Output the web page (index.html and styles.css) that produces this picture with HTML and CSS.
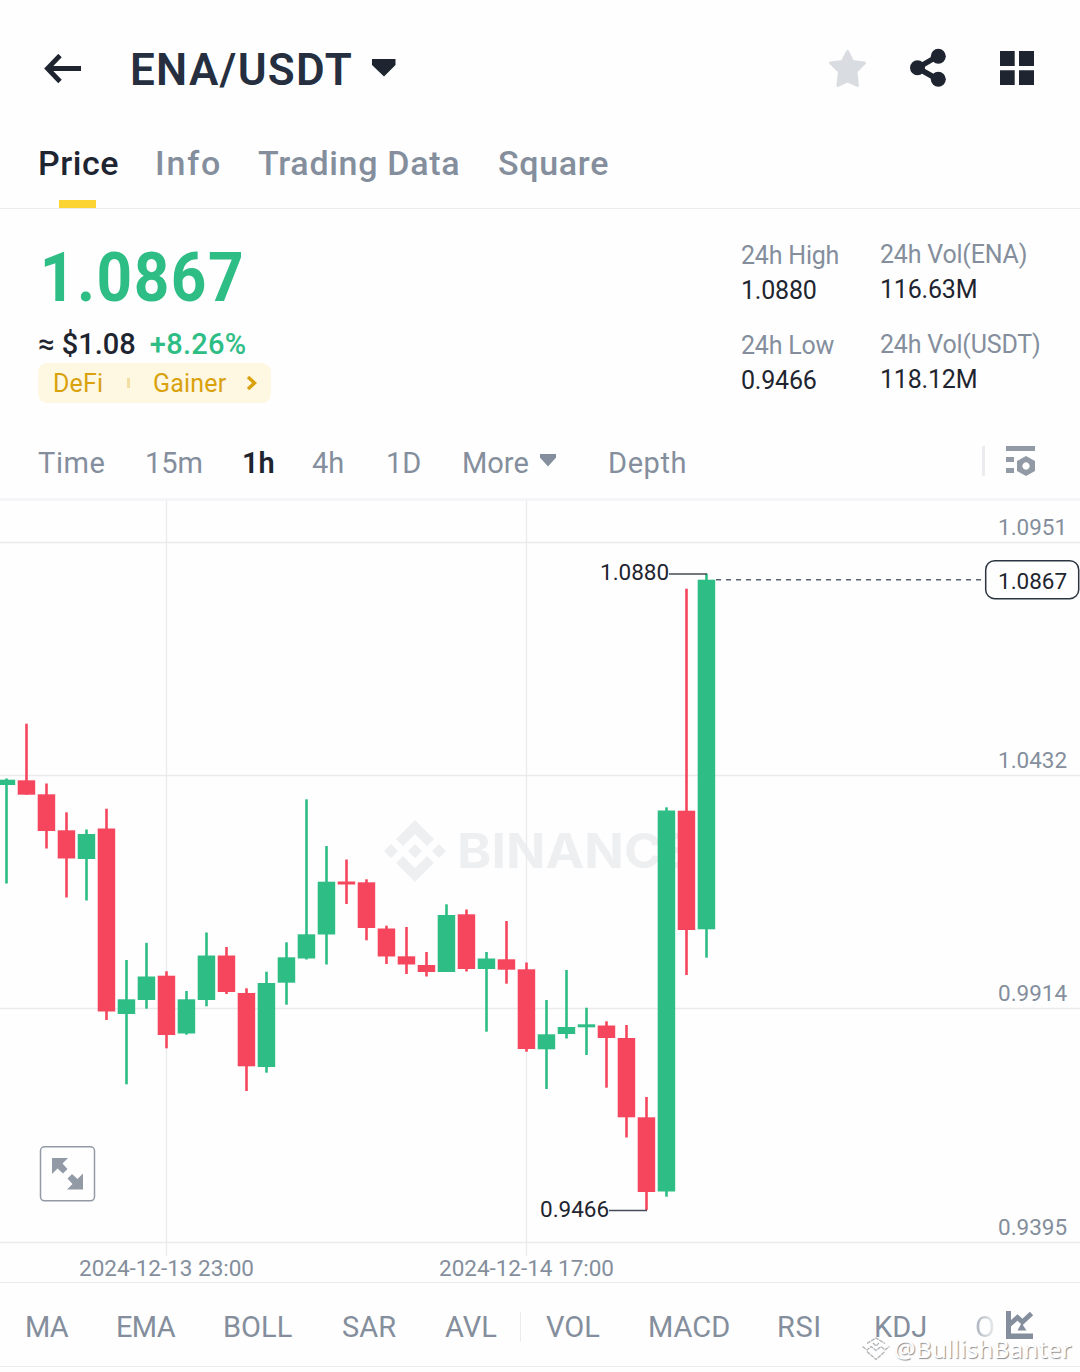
FILE: index.html
```html
<!DOCTYPE html>
<html lang="en">
<head>
  <meta charset="UTF-8" />
  <meta name="viewport" content="width=device-width, initial-scale=1.0"/>
  <title>ENA/USDT</title>
  <link rel="stylesheet" href="styles.css">
</head>
<body>

  <header class="header">
    <svg class="back" width="38" height="30" viewBox="0 0 38 30"><path d="M16 1.500 3.500 14.500l12.500 13M3.500 14.500h33.500" fill="none" stroke="#1e2530" stroke-width="4.800"/></svg>
    <h1 class="pair">ENA/USDT</h1>
    <svg class="pair-caret" width="24" height="18" viewBox="0 0 24 18"><path d="M0 0h23.500v6L12 17.500 0 6z" fill="#1e2530"/></svg>
    <div class="actions">
      <svg width="40" height="40" viewBox="0 0 40 40"><path d="M19.500 3.500l5 10 12 1.500-8.500 8.500 1.400 14L19.500 33 10 37.500l1.400-14L2.500 15l12-1.500z" fill="#d9dce1" stroke="#d9dce1" stroke-width="3" stroke-linejoin="round"/></svg>
      <svg width="38" height="40" viewBox="0 0 38 40"><path d="M29 8 8.500 20 29 31.500" fill="none" stroke="#1e2530" stroke-width="5.500"/><g fill="#1e2530"><circle cx="8.500" cy="19.800" r="7.500"/><circle cx="29.300" cy="8.300" r="7.500"/><circle cx="29.300" cy="31.300" r="7.500"/></g></svg>
      <svg width="34" height="34" viewBox="0 0 34 34"><path d="M0 0h14.700v15H0zM19 0h15v15H19zM0 19.300h14.700V34H0zM19 19.300h15V34H19z" fill="#1e2530"/></svg>
    </div>
  </header>

  <nav class="tabs">
    <div class="tab active">Price</div>
    <div class="tab tab-info">Info</div>
    <div class="tab">Trading Data</div>
    <div class="tab">Square</div>
  </nav>

  <section class="summary">
    <div class="quote">
      <div class="price">1.0867</div>
      <div class="fiat">≈ <span class="fiat-value">$1.08</span><span class="change">+8.26%</span></div>
      <div class="tags">
        <span class="tag-first">DeFi</span>
        <span class="tag-line"></span>
        <span>Gainer</span>
        <svg class="tag-arrow" width="12" height="16" viewBox="0 0 12 16"><path d="M2 2l6.500 6L2 14" fill="none" stroke="#d9a20d" stroke-width="3.400"/></svg>
      </div>
    </div>
    <div class="stats">
      <dl><dt>24h High</dt><dd>1.0880</dd></dl>
      <dl><dt>24h Low</dt><dd>0.9466</dd></dl>
    </div>
    <div class="stats stats-vol">
      <dl><dt>24h Vol(ENA)</dt><dd>116.63M</dd></dl>
      <dl><dt>24h Vol(USDT)</dt><dd>118.12M</dd></dl>
    </div>
  </section>

  <nav class="intervals">
    <span class="wide">Time</span>
    <span>15m</span>
    <span class="active">1h</span>
    <span>4h</span>
    <span>1D</span>
    <span>More</span>
    <svg class="more-caret" width="16" height="13" viewBox="0 0 16 13"><path d="M0 0h16v3.500L8 12.500 0 3.500z" fill="#848e9c"/></svg>
    <span class="wide">Depth</span>
    <div class="settings">
      <svg width="30" height="30" viewBox="0 0 30 30"><g fill="#929aa6"><path d="M0 0h29v5H0zM0 11h8v5H0zM0 22h8v5H0z"/><path fill-rule="evenodd" d="M20 10l9 5v10l-9 5-9-5V15zM20 16.300a3.700 3.700 0 1 0 .01 0z"/></g></svg>
    </div>
  </nav>

  <main class="chart">
    <svg id="chart" width="1080" height="781" viewBox="0 501 1080 781">
      <g class="watermark">
        <path d="M415 820l19 19-7 7-12-12-12 12-7-7zM415 882l19-19-7-7-12 12-12-12-7 7zM391 844l7 7-7 7-7-7zM439 844l7 7-7 7-7-7zM415 844l7 7-7 7-7-7z"/>
        <text x="457" y="868" textLength="237" lengthAdjust="spacingAndGlyphs">BINANCE</text>
      </g>
      <path class="grid" d="M0 542.500H1080M0 775.500H1080M0 1008.500H1080M0 1242.500H1080M166.500 501V1256M526.500 501V1256"/>
      <g id="candles"></g>
      <path class="marker" d="M669 574H707M609 1210.500H647"/>
      <path class="last-line" d="M716 579.700H982"/>
      <rect class="last-box" x="985.700" y="560.700" width="93" height="38" rx="9"/>
      <g class="dark">
        <text x="600" y="579.500">1.0880</text>
        <text x="540" y="1216.500">0.9466</text>
        <text x="998" y="588.500">1.0867</text>
      </g>
      <g class="axis">
        <text x="998" y="534.500">1.0951</text>
        <text x="998" y="768">1.0432</text>
        <text x="998" y="1001">0.9914</text>
        <text x="998" y="1234.500">0.9395</text>
        <text x="79" y="1275.500" textLength="175">2024-12-13 23:00</text>
        <text x="439" y="1275.500" textLength="175">2024-12-14 17:00</text>
      </g>
      <rect class="expand-box" x="40.500" y="1146.800" width="54" height="54" rx="4"/>
      <path class="expand" d="M52 1158h16l-5.500 5.500 5 5.500-4.500 4.500-5.500-5-5.500 5.500zM83 1189.500h-16l5.500-5.500-5-5.500 4.500-4.500 5.500 5 5.500-5.500z"/>
    </svg>
  </main>

  <footer class="indicators">
    <span class="narrow">MA</span>
    <span class="narrow">EMA</span>
    <span>BOLL</span>
    <span>SAR</span>
    <span>AVL</span>
    <span class="split">VOL</span>
    <span>MACD</span>
    <span class="wide">RSI</span>
    <span>KDJ</span>
    <span class="fade">O</span>
    <svg class="chart-icon" width="28" height="28" viewBox="0 0 28 28"><path d="M0 0h5v22.500h22V28H0z" fill="#848e9c"/><path d="M3 14l8.500-7.500 5 4.500L25.500 2.500" fill="none" stroke="#848e9c" stroke-width="4.800"/><path d="M15.500 12l5 7.500h-9z" fill="#848e9c"/></svg>
  </footer>

  <div class="credit">
    <svg width="28" height="24" viewBox="0 0 28 24"><path d="M5 6.500l9-5.500 9 5.500M.5 9.500l4.500 3.500 4-3.500 5 4 5-4 4 3.500 4.500-3.500M5 14.500l9 8 9-8M11 6l3 3 3-3" fill="none" stroke="#b0b2b5" stroke-width="1.300" stroke-dasharray="4 .8"/></svg>
    <span>@BullishBanter</span>
  </div>

  <script src="script.js"></script>
</body>
</html>
```

FILE: styles.css
```css
body {
  margin: 0;
  width: 1080px;
  height: 1372px;
  overflow: hidden;
  position: relative;
  background: #fefefe;
  color: #1e2530;
  font-family: Roboto, "Noto Sans", sans-serif;
}
svg {
  display: block;
  flex: none;
}
.header {
  display: flex;
  align-items: center;
  height: 139px;
  padding: 0 46px 0 44px;
}
.back {
  margin-bottom: 2px;
}
.pair {
  margin: 0 0 0 48px;
  width: 242px;
  font-size: 44px;
  font-weight: 600;
  letter-spacing: 1.3px;
  color: #252f3f;
}
.pair-caret {
  margin-bottom: 4px;
}
.actions {
  display: flex;
  align-items: center;
  margin: 0 0 3px auto;
}
.actions svg:nth-child(2) {
  margin: 0 53px 0 41px;
}
.tabs {
  display: grid;
  grid-template-columns: 117px 103px 240px 1fr;
  height: 69px;
  padding-left: 38px;
  border-bottom: 1px solid #eaecef;
}
.tab {
  font-size: 34px;
  font-weight: 500;
  line-height: 48px;
  letter-spacing: 0.7px;
  color: #848e9c;
  white-space: nowrap;
}
.tab-info {
  letter-spacing: 1.8px;
}
.tab.active {
  color: #1e2530;
  letter-spacing: 0.5px;
}
.tab.active::after {
  content: "";
  display: block;
  width: 37px;
  height: 8px;
  margin: 13px 0 0 21px;
  background: #fcd535;
}
.summary {
  display: grid;
  grid-template-columns: 703px 139px 1fr;
  box-sizing: border-box;
  height: 219px;
  padding: 29px 0 0 38px;
}
.price {
  padding-left: 2px;
  font-size: 69px;
  font-weight: 700;
  line-height: 80px;
  letter-spacing: 1.7px;
  color: #2ebd85;
  transform: scaleX(0.9);
  transform-origin: left;
}
.fiat {
  margin-top: 8px;
  font-size: 29px;
  font-weight: 500;
  line-height: 36px;
}
.change {
  margin-left: 14px;
  letter-spacing: 0.3px;
  color: #2ebd85;
}
.tags {
  display: flex;
  align-items: center;
  box-sizing: border-box;
  width: 233px;
  height: 40px;
  margin-top: 1px;
  padding-left: 15px;
  border-radius: 9px;
  background: #fef7e2;
  color: #d9a20d;
  font-size: 25px;
  letter-spacing: 0.2px;
}
.tag-first {
  width: 74px;
}
.tag-line {
  width: 3px;
  height: 10px;
  margin-right: 23px;
  background: #f4dfa3;
}
.tag-arrow {
  margin-left: auto;
  margin-right: 13px;
}
.stats-vol {
  margin-top: -1px;
}
.stats dl {
  margin: 0 0 20px;
  font-size: 25px;
  line-height: 35px;
  letter-spacing: -0.2px;
  white-space: nowrap;
}
.stats dt {
  color: #848e9c;
}
.stats dd {
  margin: 0;
}
.intervals {
  display: grid;
  grid-template-columns: 107px 97px 70px 74px 76px 78px 68px 1fr auto;
  align-items: center;
  height: 70px;
  padding: 0 44px 0 38px;
  border-bottom: 3px solid #f5f5f7;
  color: #848e9c;
  font-size: 29px;
}
.intervals .active {
  color: #1e2530;
  font-weight: 600;
}
.wide {
  letter-spacing: 0.6px;
}
.narrow {
  letter-spacing: -0.7px;
}
.more-caret {
  margin-bottom: 5px;
}
.settings {
  padding-left: 21px;
  margin-bottom: 4px;
  border-left: 3px solid #eaecef;
}
.chart {
  height: 781px;
}
.chart text {
  font-size: 22.500px;
}
.chart .watermark {
  fill: #eeeff1;
}
.chart .watermark text {
  font-family: Inter, sans-serif;
  font-size: 47.500px;
  font-weight: 700;
}
.grid {
  stroke: #eaebed;
  stroke-width: 1.300;
}
.up {
  fill: #2ebd85;
}
.down {
  fill: #f6465d;
}
.marker {
  stroke: #474d57;
  stroke-width: 1.400;
}
.last-line {
  stroke: #5a6370;
  stroke-width: 1.600;
  stroke-dasharray: 5 5;
}
.last-box {
  fill: #fefefe;
  stroke: #2b3442;
  stroke-width: 1.500;
}
.dark {
  fill: #1e2530;
}
.axis {
  fill: #848e9c;
}
.expand-box {
  fill: none;
  stroke: #929aa6;
  stroke-width: 1.500;
}
.expand {
  fill: #929aa6;
}
.indicators {
  display: grid;
  grid-template-columns: 91px 107px 119px 103px 75px 128px 129px 97px 101px 31px 1fr;
  align-items: center;
  box-sizing: border-box;
  height: 85px;
  padding: 5px 0 0 25px;
  border-top: 1px solid #eaecef;
  border-bottom: 1px solid #eaecef;
  color: #848e9c;
  font-size: 29px;
}
.split {
  padding-left: 26px;
  line-height: 30px;
  background: linear-gradient(#eaecef, #eaecef) left / 1px 100% no-repeat;
}
.indicators .fade {
  color: transparent;
  background: linear-gradient(90deg, #aab1bb, #eceef0 20px);
  background-clip: text;
  -webkit-background-clip: text;
}
.chart-icon {
  margin-bottom: 5px;
}
.credit {
  position: absolute;
  left: 862px;
  top: 1334px;
  display: flex;
  align-items: center;
  gap: 4px;
  color: #fff;
  font-family: "Noto Sans", sans-serif;
  font-size: 24px;
  letter-spacing: 0.35px;
  line-height: 30px;
  text-shadow: 1px 1px 1px #8b8d90;
}
```

FILE: script.js
```javascript
// open/close are the body edges, top/bottom the wick ends: [dir, top, bodyTop, bodyBottom, bottom]
const candles = [
  ["up", 778.5, 779.7, 785, 883.5],
  ["down", 723.7, 780.3, 794.7, 794.7],
  ["down", 783.5, 794.3, 831, 848.5],
  ["down", 812.3, 830.3, 858.5, 897.5],
  ["up", 829.5, 834, 859, 900.5],
  ["down", 808.7, 828.5, 1011.5, 1020],
  ["up", 960, 999.3, 1014, 1084.3],
  ["up", 942.8, 976.5, 1000, 1008.7],
  ["down", 971.3, 975.7, 1035, 1048.3],
  ["up", 991, 999.3, 1033.5, 1034.7],
  ["up", 932.5, 955.5, 1000, 1006.3],
  ["down", 947, 955.5, 992, 994],
  ["down", 988.3, 993, 1066.3, 1091],
  ["up", 971.7, 983, 1067, 1072.7],
  ["up", 942.3, 957.3, 982.7, 1004.7],
  ["up", 799.3, 934.3, 958.5, 959.5],
  ["up", 846, 881.7, 934.5, 964.5],
  ["down", 859.5, 881.5, 884.5, 904],
  ["down", 879.3, 882.3, 928, 940.3],
  ["down", 925.7, 928.5, 956.5, 964],
  ["down", 927, 956.3, 964.5, 974],
  ["down", 952, 965, 972, 976.5],
  ["up", 904.3, 915, 972, 972],
  ["down", 909.5, 914.3, 969, 971.5],
  ["up", 952, 958.5, 969, 1031.7],
  ["down", 921, 959.3, 969.7, 983.7],
  ["down", 962.5, 969.3, 1049, 1051.7],
  ["up", 1000, 1034.3, 1049.3, 1089],
  ["up", 970, 1027, 1034, 1038.5],
  ["up", 1007.7, 1024.3, 1027.3, 1055],
  ["down", 1021.3, 1025.5, 1038, 1087.7],
  ["down", 1025, 1038, 1117.3, 1137.5],
  ["down", 1097, 1117.3, 1192, 1210],
  ["up", 807.3, 810.5, 1191.5, 1196.7],
  ["down", 588.7, 810.7, 930, 975],
  ["up", 573.7, 579.7, 929.3, 957.7]
];

const group = document.getElementById("candles");

function addRect(cls, x, y, width, height) {
  const rect = document.createElementNS("http://www.w3.org/2000/svg", "rect");
  rect.setAttribute("class", cls);
  rect.setAttribute("x", x);
  rect.setAttribute("y", y);
  rect.setAttribute("width", width);
  rect.setAttribute("height", height);
  group.appendChild(rect);
}

candles.forEach(([dir, top, bodyTop, bodyBottom, bottom], i) => {
  const center = 6.5 + i * 20;
  addRect(dir, center - 1.3, top, 2.6, bottom - top);
  addRect(dir, center - 8.8, bodyTop, 17.5, bodyBottom - bodyTop);
});
```
